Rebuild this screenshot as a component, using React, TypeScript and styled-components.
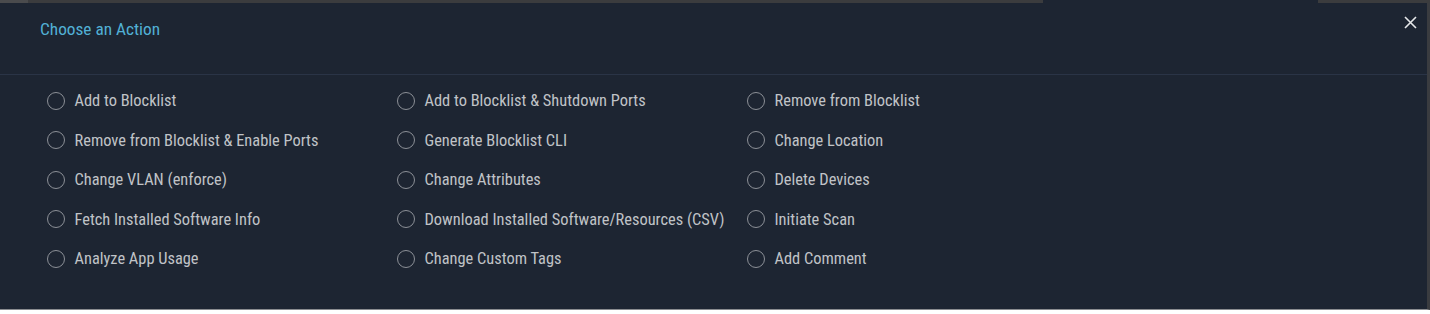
import React, { FC } from 'react'
import styled, { createGlobalStyle } from 'styled-components'

const GlobalStyle = createGlobalStyle`
  html, body {
    margin: 0;
    padding: 0;
    background: #ffffff;
  }
  body {
    font-family: 'Roboto Condensed', 'Liberation Sans Narrow', Roboto, sans-serif;
  }
`

const Page = styled.div`
  width: 1430px;
  height: 314px;
  display: flex;
  flex-direction: column;
  overflow: hidden;
`

const TopStrip = styled.div`
  height: 3px;
  display: flex;
  background: #3b3c3e;
`

const StripPart = styled.div<{ $w: number; $color: string }>`
  width: ${({ $w }) => $w}px;
  background: ${({ $color }) => $color};
`

const Modal = styled.div`
  height: 306px;
  display: flex;
  flex-direction: column;
  background: #1d2532;
  border-right: 3px solid #3a3c40;
  border-bottom: 1px solid #8a8c90;
`

const Header = styled.div`
  height: 71px;
  display: flex;
  align-items: flex-start;
  justify-content: space-between;
  padding: 0 7px 0 40px;
  border-bottom: 1px solid #2a3446;
`

const Title = styled.h2`
  margin: 14px 0 0;
  font-size: 17.3px;
  font-weight: 400;
  color: #52b1d6;
  line-height: 24px;
`

const CloseButton = styled.button`
  margin-top: 9px;
  width: 20px;
  height: 20px;
  padding: 0;
  border: none;
  background: transparent;
  display: flex;
  align-items: center;
  justify-content: center;
  cursor: pointer;
`

const Options = styled.div`
  display: grid;
  grid-template-columns: repeat(3, 350px);
  grid-auto-rows: 39.5px;
  padding: 6px 0 0 47px;
`

const Option = styled.label`
  display: flex;
  align-items: center;
  gap: 10px;
  color: #c0c3c7;
  font-size: 16.4px;
  cursor: pointer;
  white-space: nowrap;
`

const Radio = styled.span`
  width: 18px;
  height: 18px;
  box-sizing: border-box;
  border-radius: 50%;
  border: 1.5px solid #8c9097;
  flex-shrink: 0;
  margin-left: -0.5px;
`

const actions = [
  'Add to Blocklist',
  'Add to Blocklist & Shutdown Ports',
  'Remove from Blocklist',
  'Remove from Blocklist & Enable Ports',
  'Generate Blocklist CLI',
  'Change Location',
  'Change VLAN (enforce)',
  'Change Attributes',
  'Delete Devices',
  'Fetch Installed Software Info',
  'Download Installed Software/Resources (CSV)',
  'Initiate Scan',
  'Analyze App Usage',
  'Change Custom Tags',
  'Add Comment',
]

const App: FC = () => (
  <>
    <GlobalStyle />
    <Page>
      <TopStrip>
        <StripPart $w={28} $color='#4a4b4d' />
        <StripPart $w={1015} $color='#3b3c3e' />
        <StripPart $w={275} $color='#1d2532' />
        <StripPart $w={112} $color='#3b3c3e' />
      </TopStrip>
      <Modal>
        <Header>
          <Title>Choose an Action</Title>
          <CloseButton aria-label='Close'>
            <svg width='13' height='13' viewBox='0 0 13 13'>
              <path d='M1 1L12 12M12 1L1 12' stroke='#e6e8ea' strokeWidth='1.6' />
            </svg>
          </CloseButton>
        </Header>
        <Options>
          {actions.map((label) => (
            <Option key={label}>
              <Radio />
              {label}
            </Option>
          ))}
        </Options>
      </Modal>
    </Page>
  </>
)

export default App
